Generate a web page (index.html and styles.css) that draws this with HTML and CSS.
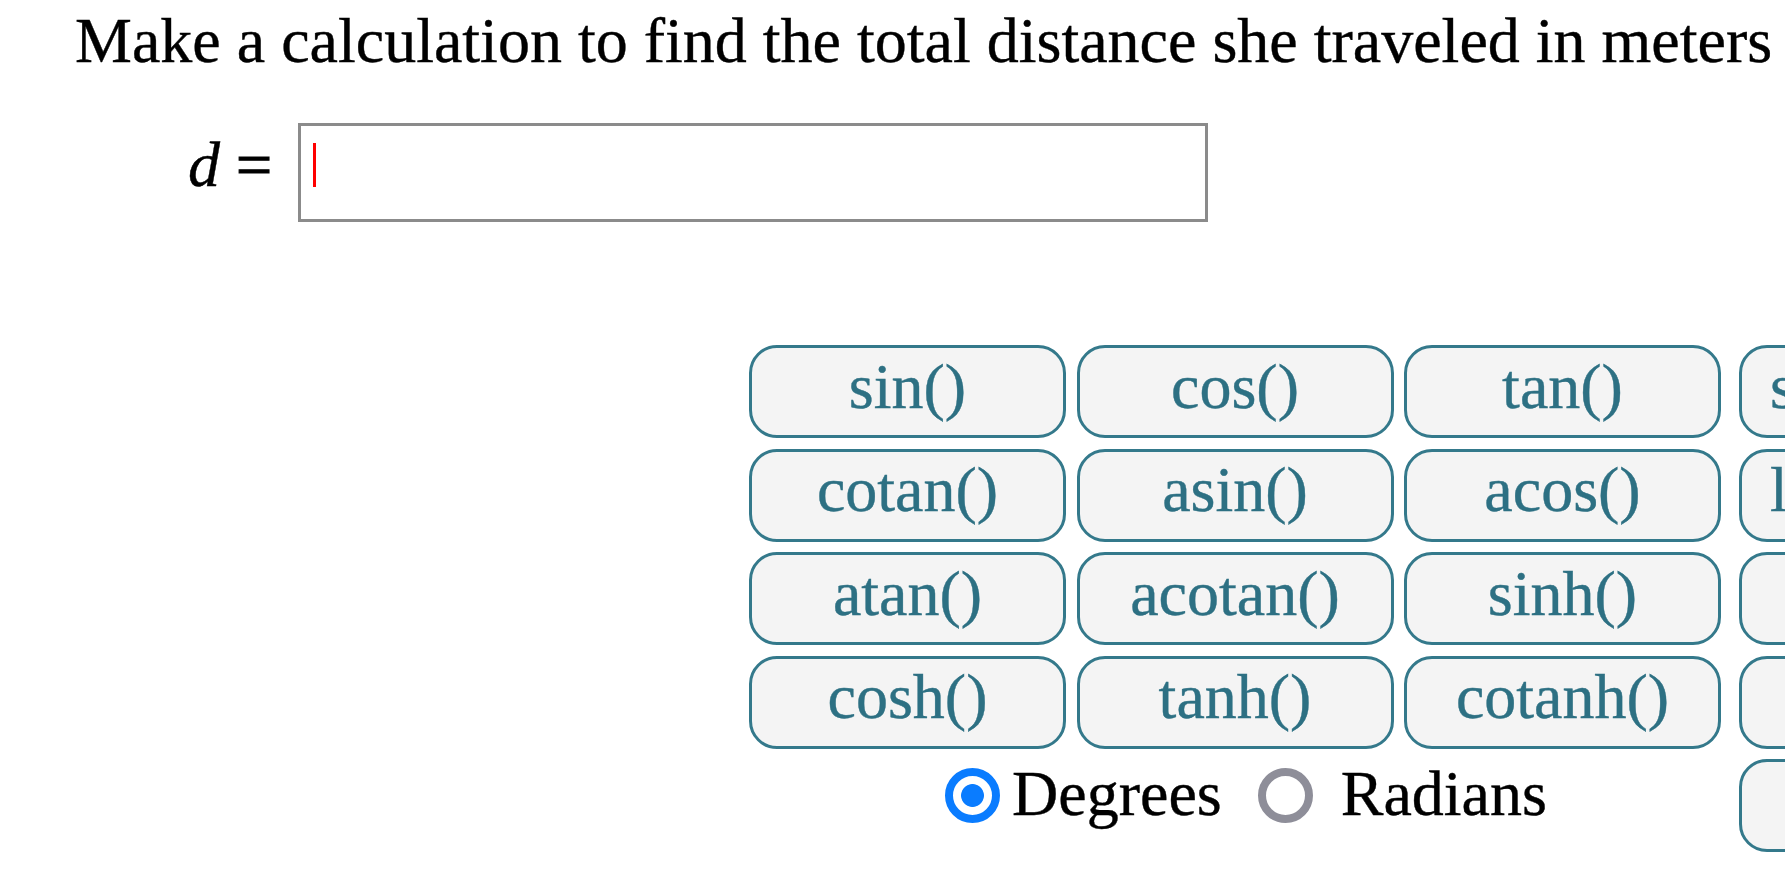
FILE: index.html
```html
<!DOCTYPE html>
<html lang="en">
<head>
<meta charset="utf-8">
<title>Distance calculation</title>
<link rel="stylesheet" href="styles.css">
</head>
<body>
<p class="question">Make a calculation to find the total distance she traveled in meters</p>
<div class="answer-row">
  <span class="answer-label"><span class="var">d</span><span class="eq">=</span></span>
  <div class="answer-box"><span class="caret"></span></div>
</div>
<div class="keypad">
  <div class="trig-panel">
    <div class="trig-grid">
      <button class="key">sin()</button>
      <button class="key">cos()</button>
      <button class="key">tan()</button>
      <button class="key">cotan()</button>
      <button class="key">asin()</button>
      <button class="key">acos()</button>
      <button class="key">atan()</button>
      <button class="key">acotan()</button>
      <button class="key">sinh()</button>
      <button class="key">cosh()</button>
      <button class="key">tanh()</button>
      <button class="key">cotanh()</button>
    </div>
    <div class="angle-mode">
      <label class="mode"><span class="radio radio-on"></span><span class="mode-text">Degrees</span></label>
      <label class="mode"><span class="radio"></span><span class="mode-text mode-text-wide">Radians</span></label>
    </div>
  </div>
  <div class="extra-col">
    <button class="key key-left">sqrt()</button>
    <button class="key key-left">log()</button>
    <button class="key"></button>
    <button class="key"></button>
    <button class="key"></button>
  </div>
</div>
</body>
</html>
```
FILE: styles.css
```css
html, body {
  overflow: hidden;
}
body {
  margin: 0;
  background: #ffffff;
  color: #000000;
  font-family: "Liberation Serif", "Times New Roman", serif;
  font-size: 64px;
  line-height: 72px;
  -webkit-text-stroke: 0.4px currentColor;
}
.question {
  margin: 5px 0 0 75px;
  white-space: nowrap;
}
.answer-row {
  display: flex;
  align-items: flex-start;
  margin-top: 46px;
  margin-left: 188px;
}
.answer-label {
  display: flex;
  margin-top: 6px;
}
.var {
  font-style: italic;
  margin-right: 16px;
}
.eq {
  margin-right: 26px;
  -webkit-text-stroke: 1.2px currentColor;
}
.answer-box {
  box-sizing: border-box;
  width: 910px;
  height: 99px;
  border: 3px solid #8b8b8b;
  padding: 17px 12px;
  display: flex;
  align-items: flex-start;
}
.caret {
  width: 3px;
  height: 44px;
  background: #ff0000;
}
.keypad {
  display: flex;
  align-items: flex-start;
  gap: 18px;
  margin-top: 123px;
  margin-left: 749px;
  width: max-content;
}
.trig-grid {
  display: grid;
  grid-template-columns: repeat(3, 317px);
  grid-auto-rows: 93px;
  column-gap: 10.5px;
  row-gap: 10.5px;
}
.extra-col {
  display: grid;
  grid-template-columns: 317px;
  grid-auto-rows: 93px;
  row-gap: 10.5px;
}
.key {
  box-sizing: border-box;
  width: 317px;
  height: 93px;
  margin: 0;
  border: 3px solid #34798b;
  border-radius: 28px;
  background: #f4f4f4;
  color: #2d7083;
  font-family: "Liberation Serif", "Times New Roman", serif;
  font-size: 64px;
  line-height: 72px;
  -webkit-text-stroke: 0.4px currentColor;
  padding: 0 0 10px 0;
  display: flex;
  align-items: center;
  justify-content: center;
  white-space: nowrap;
  overflow: hidden;
}
.key-left {
  justify-content: flex-start;
  padding-left: 28px;
}
.angle-mode {
  display: flex;
  align-items: center;
  justify-content: center;
  height: 72px;
  margin-top: 9px;
  padding-left: 22px;
}
.mode {
  display: flex;
  align-items: center;
}
.radio {
  box-sizing: border-box;
  width: 55px;
  height: 55px;
  border-radius: 50%;
  border: 8px solid #8e8e99;
  background: #ffffff;
  margin-top: 4px;
}
.radio-on {
  border-color: #0a7cff;
  background: radial-gradient(circle, #0a7cff 0 11px, #ffffff 11.8px);
}
.mode-text {
  margin-left: 12px;
  margin-right: 36px;
}
.mode-text-wide {
  margin-left: 28px;
  margin-right: 0;
}
```
